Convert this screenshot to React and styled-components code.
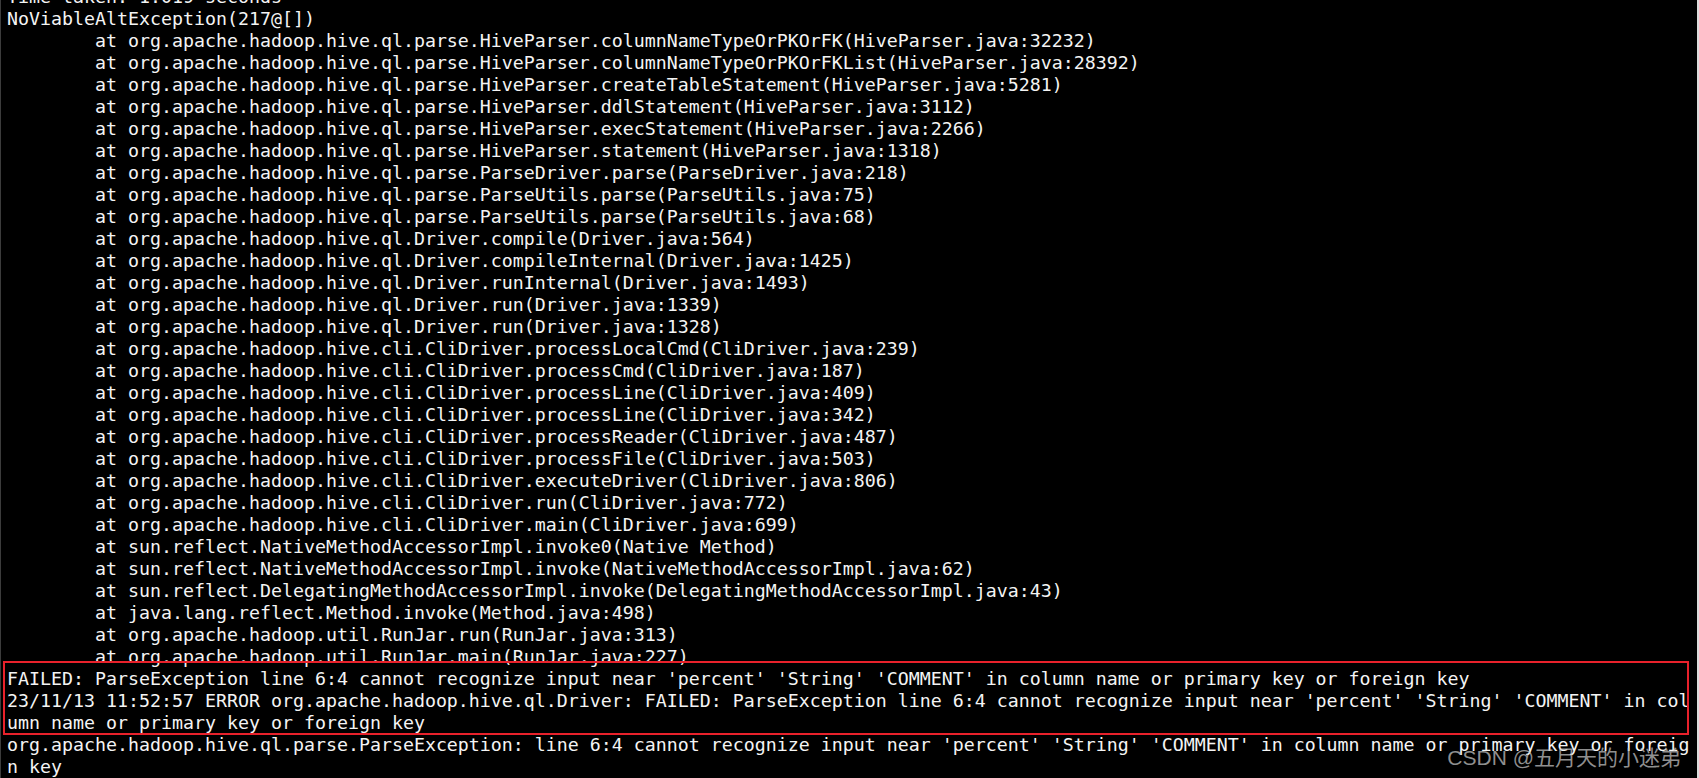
import React from 'react';
import styled, { createGlobalStyle } from 'styled-components';

const TAB = '        ';

const traceLines = [
  'Time taken: 1.019 seconds',
  'NoViableAltException(217@[])',
  TAB + 'at org.apache.hadoop.hive.ql.parse.HiveParser.columnNameTypeOrPKOrFK(HiveParser.java:32232)',
  TAB + 'at org.apache.hadoop.hive.ql.parse.HiveParser.columnNameTypeOrPKOrFKList(HiveParser.java:28392)',
  TAB + 'at org.apache.hadoop.hive.ql.parse.HiveParser.createTableStatement(HiveParser.java:5281)',
  TAB + 'at org.apache.hadoop.hive.ql.parse.HiveParser.ddlStatement(HiveParser.java:3112)',
  TAB + 'at org.apache.hadoop.hive.ql.parse.HiveParser.execStatement(HiveParser.java:2266)',
  TAB + 'at org.apache.hadoop.hive.ql.parse.HiveParser.statement(HiveParser.java:1318)',
  TAB + 'at org.apache.hadoop.hive.ql.parse.ParseDriver.parse(ParseDriver.java:218)',
  TAB + 'at org.apache.hadoop.hive.ql.parse.ParseUtils.parse(ParseUtils.java:75)',
  TAB + 'at org.apache.hadoop.hive.ql.parse.ParseUtils.parse(ParseUtils.java:68)',
  TAB + 'at org.apache.hadoop.hive.ql.Driver.compile(Driver.java:564)',
  TAB + 'at org.apache.hadoop.hive.ql.Driver.compileInternal(Driver.java:1425)',
  TAB + 'at org.apache.hadoop.hive.ql.Driver.runInternal(Driver.java:1493)',
  TAB + 'at org.apache.hadoop.hive.ql.Driver.run(Driver.java:1339)',
  TAB + 'at org.apache.hadoop.hive.ql.Driver.run(Driver.java:1328)',
  TAB + 'at org.apache.hadoop.hive.cli.CliDriver.processLocalCmd(CliDriver.java:239)',
  TAB + 'at org.apache.hadoop.hive.cli.CliDriver.processCmd(CliDriver.java:187)',
  TAB + 'at org.apache.hadoop.hive.cli.CliDriver.processLine(CliDriver.java:409)',
  TAB + 'at org.apache.hadoop.hive.cli.CliDriver.processLine(CliDriver.java:342)',
  TAB + 'at org.apache.hadoop.hive.cli.CliDriver.processReader(CliDriver.java:487)',
  TAB + 'at org.apache.hadoop.hive.cli.CliDriver.processFile(CliDriver.java:503)',
  TAB + 'at org.apache.hadoop.hive.cli.CliDriver.executeDriver(CliDriver.java:806)',
  TAB + 'at org.apache.hadoop.hive.cli.CliDriver.run(CliDriver.java:772)',
  TAB + 'at org.apache.hadoop.hive.cli.CliDriver.main(CliDriver.java:699)',
  TAB + 'at sun.reflect.NativeMethodAccessorImpl.invoke0(Native Method)',
  TAB + 'at sun.reflect.NativeMethodAccessorImpl.invoke(NativeMethodAccessorImpl.java:62)',
  TAB + 'at sun.reflect.DelegatingMethodAccessorImpl.invoke(DelegatingMethodAccessorImpl.java:43)',
  TAB + 'at java.lang.reflect.Method.invoke(Method.java:498)',
  TAB + 'at org.apache.hadoop.util.RunJar.run(RunJar.java:313)',
  TAB + 'at org.apache.hadoop.util.RunJar.main(RunJar.java:227)',
];

const failedLines = [
  "FAILED: ParseException line 6:4 cannot recognize input near 'percent' 'String' 'COMMENT' in column name or primary key or foreign key",
  "23/11/13 11:52:57 ERROR org.apache.hadoop.hive.ql.Driver: FAILED: ParseException line 6:4 cannot recognize input near 'percent' 'String' 'COMMENT' in col",
  'umn name or primary key or foreign key',
];

const tailLines = [
  "org.apache.hadoop.hive.ql.parse.ParseException: line 6:4 cannot recognize input near 'percent' 'String' 'COMMENT' in column name or primary key or foreig",
  'n key',
];

export default function App() {
  return (
    <>
      <GlobalStyle />
      <Terminal>
        <Output>
          {traceLines.map((text, i) => (
            <Line key={'t' + i}>{text}</Line>
          ))}
          <Highlight>
            {failedLines.map((text, i) => (
              <Line key={'f' + i}>{text}</Line>
            ))}
          </Highlight>
          {tailLines.map((text, i) => (
            <Line key={'e' + i}>{text}</Line>
          ))}
        </Output>
        <Watermark>CSDN @五月天的小迷弟</Watermark>
      </Terminal>
    </>
  );
}

const GlobalStyle = createGlobalStyle`
  html, body {
    margin: 0;
    padding: 0;
    background: #000;
  }
`;

const Terminal = styled.div`
  position: relative;
  box-sizing: border-box;
  width: 1699px;
  height: 778px;
  overflow: hidden;
  background: #000;
  border-left: 1px solid #3c3c3c;
  border-right: 2px solid #dcdcdc;
`;

const Output = styled.div`
  margin-top: -14.4px;
  padding-left: 6px;
`;

const Line = styled.div`
  height: 22px;
  font-family: 'DejaVu Sans Mono', monospace;
  font-size: 18.27px;
  line-height: 22px;
  color: #f4f4f4;
  white-space: pre;
`;

const Highlight = styled.div`
  position: relative;

  &::after {
    content: '';
    position: absolute;
    top: -6.6px;
    bottom: -1.4px;
    left: -4px;
    width: 1686px;
    box-sizing: border-box;
    border: 2px solid #e8212b;
    pointer-events: none;
  }
`;

const Watermark = styled.div`
  position: absolute;
  right: 16px;
  bottom: 8px;
  font-family: 'Liberation Sans', 'Noto Sans CJK SC', sans-serif;
  font-size: 21px;
  line-height: 24px;
  color: rgba(200, 200, 200, 0.72);
  white-space: nowrap;
`;
